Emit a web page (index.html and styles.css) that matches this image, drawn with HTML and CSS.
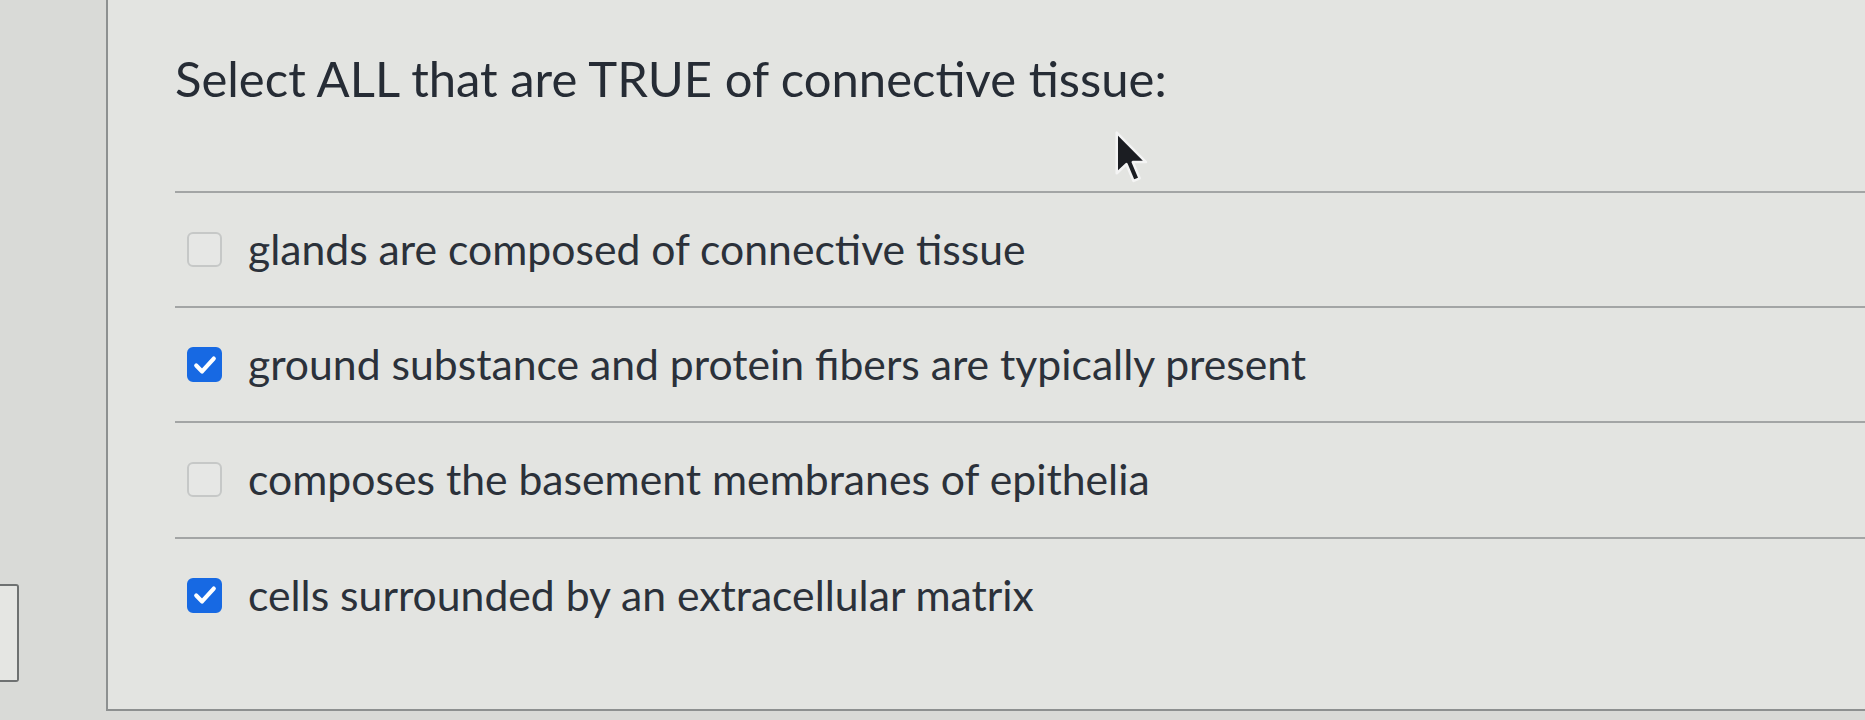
FILE: index.html
```html
<!DOCTYPE html>
<html lang="en">
<head>
<meta charset="utf-8">
<title>Quiz question</title>
<link rel="stylesheet" href="styles.css">
</head>
<body>
<div class="page">
  <aside class="side">
    <div class="side-box"></div>
  </aside>
  <main class="card">
    <h1 class="question">Select ALL that are TRUE of connective tissue:</h1>
    <ul class="answers">
      <li class="answer">
        <span class="box"></span>
        <span class="label">glands are composed of connective tissue</span>
      </li>
      <li class="answer">
        <span class="box checked"><svg viewBox="0 0 24 24" width="28" height="28"><path d="M4.5 12.5l5 5L19.5 6.5" fill="none" stroke="#fff" stroke-width="3.6" stroke-linecap="round" stroke-linejoin="round"/></svg></span>
        <span class="label">ground substance and protein fibers are typically present</span>
      </li>
      <li class="answer">
        <span class="box"></span>
        <span class="label">composes the basement membranes of epithelia</span>
      </li>
      <li class="answer">
        <span class="box checked"><svg viewBox="0 0 24 24" width="28" height="28"><path d="M4.5 12.5l5 5L19.5 6.5" fill="none" stroke="#fff" stroke-width="3.6" stroke-linecap="round" stroke-linejoin="round"/></svg></span>
        <span class="label">cells surrounded by an extracellular matrix</span>
      </li>
    </ul>
    <svg class="cursor" viewBox="0 0 14 22" width="36" height="56"><path d="M1 1 L1 17 L4.8 13.4 L7.6 20 L10 19 L7.3 12.6 L12.5 12.6 Z" fill="#1b1d22" stroke="#f4f4f4" stroke-width="1" stroke-linejoin="round"/></svg>
  </main>
</div>
</body>
</html>
```
FILE: styles.css
```css
html, body {
  margin: 0;
  padding: 0;
}
body {
  width: 1865px;
  height: 720px;
  overflow: hidden;
  background: #d9dad7;
  font-family: Lato, "Open Sans", "Liberation Sans", sans-serif;
  color: #2c323b;
}
.page {
  display: flex;
  align-items: flex-start;
  width: 1865px;
  height: 720px;
}
.side {
  width: 106px;
  flex: none;
  padding-top: 584px;
}
.side-box {
  width: 17px;
  height: 94px;
  background: #e5e6e3;
  border: 2px solid #6e7171;
  border-left: none;
  border-radius: 0 3px 3px 0;
}
.card {
  position: relative;
  flex: 1;
  height: 660px;
  background: #e3e4e1;
  border-left: 2px solid #8d9090;
  border-bottom: 2px solid #8d9090;
  padding: 49px 0 0 67px;
}
.question {
  margin: 0;
  font-size: 49px;
  font-weight: 400;
  line-height: 1.2;
  color: #262c35;
  letter-spacing: 0;
}
.answers {
  list-style: none;
  margin: 83px 0 0 0;
  padding: 0;
}
.answer {
  display: flex;
  align-items: center;
  border-top: 2px solid #a3a5a5;
  padding: 30px 0 32px 12px;
  gap: 26px;
}
.box {
  width: 35px;
  height: 35px;
  flex: none;
  border: 2px solid #c6c8c7;
  border-radius: 6px;
  background: #e6e7e5;
  display: flex;
  align-items: center;
  justify-content: center;
  box-sizing: border-box;
  margin-top: 2px;
}
.box.checked {
  background: #1769e3;
  border-color: #1769e3;
}
.label {
  font-size: 42.7px;
  line-height: 1.2;
  color: #2b313a;
}
.cursor {
  position: absolute;
  left: 1006px;
  top: 130px;
}
```
